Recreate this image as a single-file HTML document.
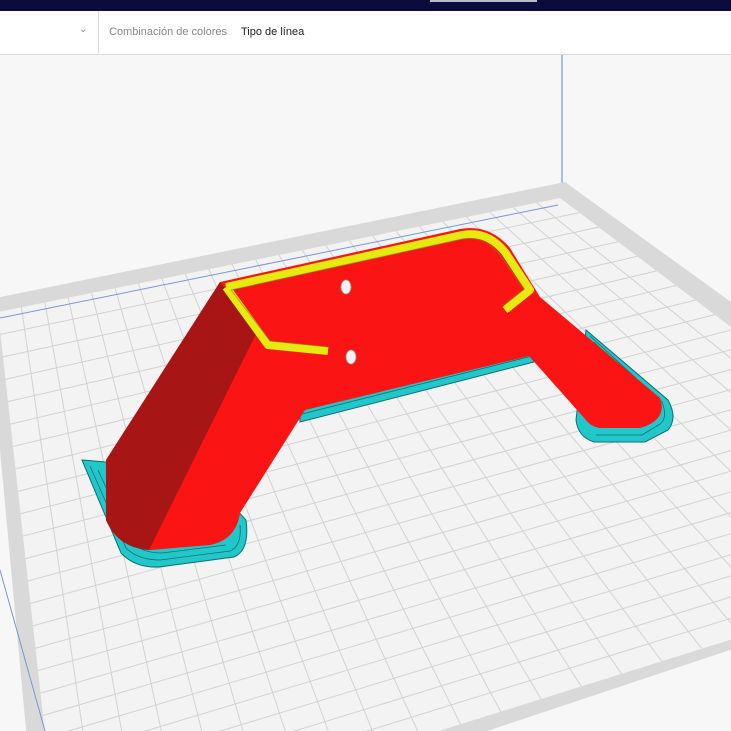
<!DOCTYPE html>
<html><head><meta charset="utf-8"><style>
html,body{margin:0;padding:0;width:731px;height:731px;overflow:hidden;background:#f7f7f7;font-family:"Liberation Sans",sans-serif}
#top{position:absolute;left:0;top:0;width:731px;height:11px;background:#0b0b3c}
#tab{position:absolute;left:430px;top:0;width:107px;height:2px;background:#b8bccf}
#bar{position:absolute;left:0;top:11px;width:731px;height:43px;background:#fff;border-bottom:1px solid #ddd}
#div{position:absolute;left:98px;top:11px;width:1px;height:43px;background:#ddd}
.t{position:absolute;top:26px;font-size:11px}
svg{position:absolute;left:0;top:55px;display:block}
</style></head><body>
<div id="top"><div id="tab"></div></div>
<div id="bar"></div><div id="div"></div>
<div class="t" style="left:79px;top:24px;color:#888;font-size:10px">&#8964;</div>
<div class="t" style="left:109px;color:#888">Combinación de colores</div>
<div class="t" style="left:241px;color:#222">Tipo de línea</div>
<svg id="s" width="731" height="676" viewBox="0 55 731 676">
<line x1="562" y1="55" x2="562" y2="190" stroke="#5a8ad8" stroke-width="1"/>
<polygon points="-14,300 565,182 1060,540 40,880" fill="#d9d9d9"/>
<polygon points="-2,312 560,198 1024,548 58,850" fill="#f3f3f3"/>
<g id="grid" stroke="#d2d2d2" stroke-width="1"></g>
<polyline points="0,318 558,205" stroke="#7a96d6" stroke-width="1" fill="none"/>
<polyline points="0,570 45,731" stroke="#7a96d6" stroke-width="1" fill="none"/>
<g fill="#22c7c9" stroke="#0d6f72" stroke-width="1">
<path d="M82,460 L121,553 Q135,568 159,567 L234,557 Q250,550 246,520 L200,470 Z"/>
<path d="M300,404 L530,348 L534,362 L300,422 Z"/>
<path d="M586,330 L668,400 Q678,418 668,430 L645,442 L594,442 Q578,437 576,420 Z"/>
</g>
<g fill="none" stroke="#0d6f72" stroke-width="0.8">
<path d="M90,466 L126,548 Q138,560 160,560 L230,551 Q242,546 240,525"/>
<path d="M98,470 L131,542 Q142,553 162,553 L226,545"/>
<path d="M302,414 L532,356"/>
<path d="M590,336 L662,402 Q668,418 660,424 L642,435 L596,435"/>
<path d="M594,342 L656,404 Q660,414 654,418 L640,427"/>
</g>
<path d="M220,282 L460,229 Q490,224 510,248 L540,297 L660,398 Q668,420 640,428 L600,428 Q590,426 586,420 L529,356 L305,410 L240,513 Q236,540 210,545 L151,550 Q118,548 106,520 L106,460 Z" fill="#fb1414"/>
<path d="M220,282 L258,330 L149,550 Q118,548 106,520 L106,460 Z" fill="#a81515"/>
<g fill="none" stroke="#e6ea10" stroke-width="8" stroke-linejoin="round">
<path d="M226,287 L268,345 L328,351"/>
<path d="M226,287 L462,235 Q487,230 505,252 L530,290 L505,310"/>
</g>
<g fill="none" stroke="#7a8a10" stroke-width="1" opacity=".6">
<path d="M231,290 L270,341 L328,347"/>
<path d="M231,290 L462,239 Q484,235 500,255 L524,289 L503,305"/>
</g>
<ellipse cx="346" cy="287" rx="5" ry="7" fill="#f2f2f2" stroke="#999" stroke-width=".8"/>
<ellipse cx="351" cy="357" rx="5" ry="7" fill="#f2f2f2" stroke="#999" stroke-width=".8"/>
</svg>
<script>
var A=[-2,312],B=[560,198],C=[1024,548],D=[58,850],N=24,g=document.getElementById('grid'),s='';
function P(u,v){return [A[0]*(1-u)*(1-v)+B[0]*u*(1-v)+C[0]*u*v+D[0]*(1-u)*v,A[1]*(1-u)*(1-v)+B[1]*u*(1-v)+C[1]*u*v+D[1]*(1-u)*v];}
for(var i=1;i<N;i++){var t=i/N,p=P(t,0),q=P(t,1),r=P(0,t),w=P(1,t);
s+='<line x1="'+p[0]+'" y1="'+p[1]+'" x2="'+q[0]+'" y2="'+q[1]+'"/>';
s+='<line x1="'+r[0]+'" y1="'+r[1]+'" x2="'+w[0]+'" y2="'+w[1]+'"/>';}
g.innerHTML=s;
</script>
</body></html>
